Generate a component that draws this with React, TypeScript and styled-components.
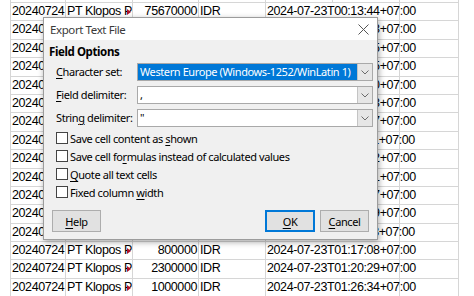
import React from "react";
import styled, { createGlobalStyle } from "styled-components";

const GlobalStyle = createGlobalStyle`
  html, body {
    margin: 0;
    padding: 0;
    background: #fff;
  }
`;

const uiFont = `"Noto Sans", "Open Sans", Arial, sans-serif`;
const sheetFont = `"Liberation Sans", Arial, sans-serif`;

const Screen = styled.div`
  position: relative;
  width: 474px;
  height: 296px;
  overflow: hidden;
  background: #fff;
`;

/* ---------- spreadsheet behind the dialog ---------- */

const Sheet = styled.div`
  margin-top: -15.4px;
  font-family: ${sheetFont};
  font-size: 12.5px;
  letter-spacing: -0.4px;
  color: #000;
`;

const Row = styled.div`
  display: grid;
  grid-template-columns: 11px 55px 67px 66px 67px 67px 67px 59px 1fr;
  height: 18.4px;
`;

const Gutter = styled.div`
  border-right: 1px solid #d6d6d6;
`;

const Cell = styled.div<{ $align?: "left" | "right"; $clipped?: boolean; $span?: number }>`
  position: relative;
  box-sizing: border-box;
  grid-column: span ${(p) => p.$span ?? 1};
  border-right: 1px solid #d6d6d6;
  border-bottom: 1px solid #d6d6d6;
  padding: 0 ${(p) => (p.$clipped ? "5px" : "1px")} 0 1px;
  line-height: 17.4px;
  white-space: nowrap;
  overflow: ${(p) => (p.$span ? "visible" : "hidden")};
  text-align: ${(p) => p.$align ?? "left"};

  ${(p) =>
    p.$clipped &&
    `
    &::after {
      content: "";
      position: absolute;
      right: 1px;
      top: 50%;
      margin-top: -3px;
      border-left: 4px solid #b0102a;
      border-top: 3px solid transparent;
      border-bottom: 3px solid transparent;
    }
  `}
`;

const Blank = styled.div``;

/* ---------- dialog ---------- */

const Dialog = styled.div`
  position: absolute;
  left: 43px;
  top: 17px;
  width: 335px;
  height: 223px;
  box-sizing: border-box;
  border: 1px solid #9c9c9c;
  box-shadow: 1px 2px 6px rgba(0, 0, 0, 0.35);
  background: #f0f0f0;
  display: flex;
  flex-direction: column;
  font-family: ${uiFont};
  font-size: 11px;
  letter-spacing: -0.4px;
  color: #000;
`;

const TitleBar = styled.div`
  height: 22px;
  background: #fff;
  display: flex;
  align-items: center;
  justify-content: space-between;
  padding: 0 8px 0 6px;
`;

const Title = styled.span`
  color: #3a3a3a;
  font-size: 11.5px;
`;

const Body = styled.div`
  flex: 1;
  display: flex;
  flex-direction: column;
  padding: 4px 4px 7px 5px;
`;

const Heading = styled.div`
  font-weight: 700;
  font-size: 11.5px;
  line-height: 16px;
`;

const Form = styled.div`
  display: grid;
  grid-template-columns: 81px 236px;
  grid-auto-rows: 18px;
  row-gap: 5px;
  margin: 3px 0 0 7px;
  align-items: center;
`;

const Label = styled.label`
  line-height: 18px;
  white-space: nowrap;
`;

const Key = styled.span`
  text-decoration: underline;
  text-underline-offset: 2px;
`;

const Combo = styled.div`
  height: 18px;
  box-sizing: border-box;
  border: 1px solid #a9a9a9;
  background: #fff;
  display: flex;
`;

const ComboValue = styled.div<{ $selected?: boolean }>`
  flex: 1;
  padding-left: 2px;
  line-height: 16px;
  white-space: nowrap;
  overflow: hidden;
  background: ${(p) => (p.$selected ? "#0078d7" : "#fff")};
  color: ${(p) => (p.$selected ? "#fff" : "#000")};
`;

const ComboButton = styled.div`
  width: 14px;
  background: #e6e6e6;
  border-left: 1px solid #c4c4c4;
  display: flex;
  align-items: center;
  justify-content: center;
`;

const Checks = styled.div`
  display: flex;
  flex-direction: column;
  margin: 2px 0 0 7px;
`;

const CheckRow = styled.label`
  display: flex;
  align-items: center;
  height: 18px;
  gap: 2px;
  white-space: nowrap;
`;

const Box = styled.span`
  width: 12px;
  height: 12px;
  box-sizing: border-box;
  border: 1px solid #444;
  background: #fff;
`;

const Buttons = styled.div`
  margin-top: auto;
  display: flex;
  align-items: center;
  padding: 0 4px 0 3px;
`;

const Button = styled.button<{ $default?: boolean }>`
  height: 22px;
  width: ${(p) => (p.$default ? "50px" : "49px")};
  box-sizing: border-box;
  border: 1px solid ${(p) => (p.$default ? "#0078d7" : "#adadad")};
  box-shadow: ${(p) => (p.$default ? "inset 0 0 0 1px #0078d7" : "none")};
  background: #e1e1e1;
  font-family: ${uiFont};
  font-size: 11px;
  letter-spacing: -0.4px;
  color: #000;
  padding: 0;
`;

const Spacer = styled.div`
  flex: 1;
`;

const Gap = styled.div`
  width: 5px;
`;

const Chevron = () => (
  <svg width="8" height="5" viewBox="0 0 8 5">
    <path d="M0.5 0.5 L4 4 L7.5 0.5" fill="none" stroke="#6b6b6b" strokeWidth="1" />
  </svg>
);

const CloseIcon = () => (
  <svg width="11" height="11" viewBox="0 0 11 11">
    <path d="M0.5 0.5 L10.5 10.5 M10.5 0.5 L0.5 10.5" stroke="#555" strokeWidth="1" />
  </svg>
);

type SheetRow = { id: string; name: string; amount: string; cur: string; ts: string };

const rows: SheetRow[] = [
  { id: "", name: "", amount: "", cur: "", ts: "" },
  { id: "20240724", name: "PT Klopos Pratama", amount: "75670000", cur: "IDR", ts: "2024-07-23T00:13:44+07:00" },
  { id: "20240724", name: "PT Klopos Pratama", amount: "1500000", cur: "IDR", ts: "2024-07-23T00:16:53+07:00" },
  { id: "20240724", name: "PT Klopos Pratama", amount: "250000", cur: "IDR", ts: "2024-07-23T00:21:05+07:00" },
  { id: "20240724", name: "PT Klopos Pratama", amount: "900000", cur: "IDR", ts: "2024-07-23T00:25:15+07:00" },
  { id: "20240724", name: "PT Klopos Pratama", amount: "3200000", cur: "IDR", ts: "2024-07-23T00:29:40+07:00" },
  { id: "20240724", name: "PT Klopos Pratama", amount: "600000", cur: "IDR", ts: "2024-07-23T00:33:23+07:00" },
  { id: "20240724", name: "PT Klopos Pratama", amount: "1200000", cur: "IDR", ts: "2024-07-23T00:38:07+07:00" },
  { id: "20240724", name: "PT Klopos Pratama", amount: "450000", cur: "IDR", ts: "2024-07-23T00:42:11+07:00" },
  { id: "20240724", name: "PT Klopos Pratama", amount: "700000", cur: "IDR", ts: "2024-07-23T00:47:32+07:00" },
  { id: "20240724", name: "PT Klopos Pratama", amount: "2000000", cur: "IDR", ts: "2024-07-23T00:53:21+07:00" },
  { id: "20240724", name: "PT Klopos Pratama", amount: "350000", cur: "IDR", ts: "2024-07-23T00:58:57+07:00" },
  { id: "20240724", name: "PT Klopos Pratama", amount: "5000000", cur: "IDR", ts: "2024-07-23T01:04:19+07:00" },
  { id: "20240724", name: "PT Klopos Pratama", amount: "1100000", cur: "IDR", ts: "2024-07-23T01:11:43+07:00" },
  { id: "20240724", name: "PT Klopos Pratama", amount: "800000", cur: "IDR", ts: "2024-07-23T01:17:08+07:00" },
  { id: "20240724", name: "PT Klopos Pratama", amount: "2300000", cur: "IDR", ts: "2024-07-23T01:20:29+07:00" },
  { id: "20240724", name: "PT Klopos Pratama", amount: "1000000", cur: "IDR", ts: "2024-07-23T01:26:34+07:00" },
];

const App = () => (
  <Screen>
    <GlobalStyle />
    <Sheet>
      {rows.map((r, i) => (
        <Row key={i}>
          <Gutter />
          <Cell>{r.id}</Cell>
          <Cell $clipped={!!r.name}>{r.name}</Cell>
          <Cell $align="right">{r.amount}</Cell>
          <Cell>{r.cur}</Cell>
          {r.ts ? (
            <Cell $span={2}>{r.ts}</Cell>
          ) : (
            <>
              <Cell />
              <Cell />
            </>
          )}
          <Cell />
          <Blank />
        </Row>
      ))}
    </Sheet>

    <Dialog>
      <TitleBar>
        <Title>Export Text File</Title>
        <CloseIcon />
      </TitleBar>
      <Body>
        <Heading>Field Options</Heading>
        <Form>
          <Label>
            <Key>C</Key>haracter set:
          </Label>
          <Combo>
            <ComboValue $selected>Western Europe (Windows-1252/WinLatin 1)</ComboValue>
            <ComboButton>
              <Chevron />
            </ComboButton>
          </Combo>
          <Label>
            <Key>F</Key>ield delimiter:
          </Label>
          <Combo>
            <ComboValue>,</ComboValue>
            <ComboButton>
              <Chevron />
            </ComboButton>
          </Combo>
          <Label>
            Strin<Key>g</Key> delimiter:
          </Label>
          <Combo>
            <ComboValue>"</ComboValue>
            <ComboButton>
              <Chevron />
            </ComboButton>
          </Combo>
        </Form>
        <Checks>
          <CheckRow>
            <Box />
            <span>
              Save cell content as <Key>s</Key>hown
            </span>
          </CheckRow>
          <CheckRow>
            <Box />
            <span>
              Save cell fo<Key>r</Key>mulas instead of calculated values
            </span>
          </CheckRow>
          <CheckRow>
            <Box />
            <span>
              <Key>Q</Key>uote all text cells
            </span>
          </CheckRow>
          <CheckRow>
            <Box />
            <span>
              Fixed column <Key>w</Key>idth
            </span>
          </CheckRow>
        </Checks>
        <Buttons>
          <Button>
            <Key>H</Key>elp
          </Button>
          <Spacer />
          <Button $default>
            <Key>O</Key>K
          </Button>
          <Gap />
          <Button>
            <Key>C</Key>ancel
          </Button>
        </Buttons>
      </Body>
    </Dialog>
  </Screen>
);

export default App;
